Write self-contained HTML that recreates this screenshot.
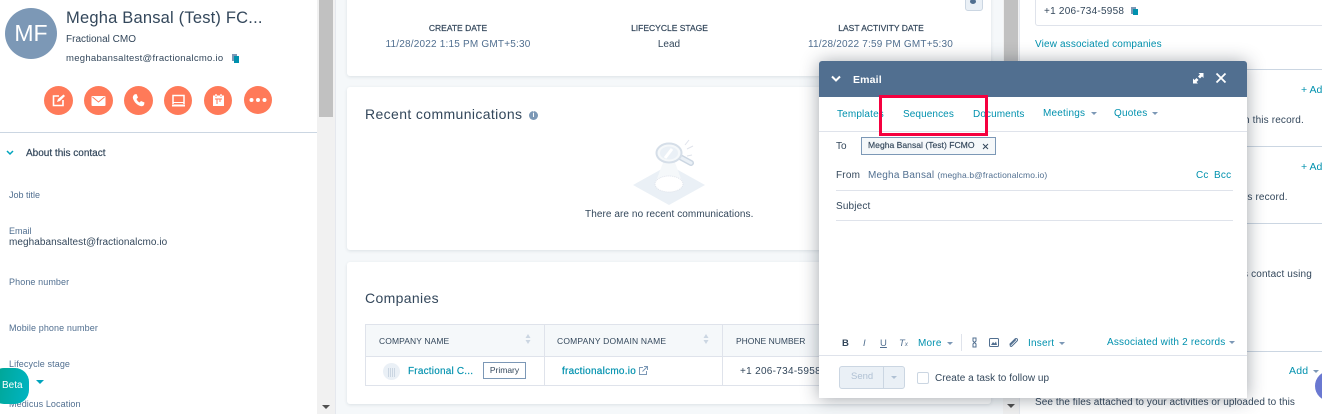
<!DOCTYPE html>
<html><head><meta charset="utf-8"><style>
html,body{margin:0;padding:0;width:1322px;height:414px;overflow:hidden;background:#f5f8fa;font-family:"Liberation Sans",sans-serif;color:#33475b}
.a{position:absolute}
.t{position:absolute;white-space:nowrap;line-height:14px;font-size:10px}
.l{color:#0091ae}
.c{position:absolute;background:#fff;border-radius:3px;box-shadow:0 1px 3px rgba(45,62,80,.12)}
.b{position:absolute;width:29px;height:29px;top:86px;border-radius:50%;background:#ff7a59}
.b svg{position:absolute;left:0;top:0}
.lab{color:#516f90;font-size:9px}
.ln{position:absolute;height:1px;background:#dfe3eb}
.hd{font-size:8.5px;text-align:center;-webkit-text-stroke:.2px #33475b}
.car{position:absolute;width:0;height:0;border-left:3px solid transparent;border-right:3px solid transparent;border-top:3px solid #7c98b6}
</style></head><body>
<div class="a" style="left:0;top:0;width:1322px;height:414px;overflow:hidden">

<!-- left panel -->
<div class="a" style="left:0;top:0;width:317px;height:414px;background:#fff"></div>
<div class="a" style="left:317px;top:0;width:18px;height:414px;background:#f1f1f1"></div>
<div class="a" style="left:319px;top:0;width:14px;height:117px;background:#c1c1c1"></div>
<div class="a" style="left:335px;top:0;width:1px;height:414px;background:#e5e8ee"></div>
<div class="a" style="left:322px;top:405px;border-left:4px solid transparent;border-right:4px solid transparent;border-top:4px solid #505050"></div>

<div class="a" style="left:5px;top:8px;width:52px;height:51px;border-radius:50%;background:#7c98b6;color:#fff;font-size:23px;line-height:51px;text-align:center">MF</div>
<div class="t" style="left:66px;top:8px;font-size:16.5px;line-height:20px;letter-spacing:.2px">Megha Bansal (Test) FC...</div>
<div class="t" style="left:66px;top:33px;font-size:10px">Fractional CMO</div>
<div class="t" style="left:66px;top:52px;font-size:9.5px;letter-spacing:.28px">meghabansaltest@fractionalcmo.io</div>
<svg class="a" style="left:232px;top:54px" width="8" height="9"><rect x="0" y="0" width="5" height="7" fill="#7c98b6"/><rect x="2" y="2" width="5" height="7" fill="#0091ae"/></svg>

<div class="b" style="left:44px"><svg width="29" height="29" fill="none" stroke="#fff" stroke-width="1.6"><path d="M15 10H9.500V19.500H19V14"/><path d="M13 16l1-3 5.500-4.500 1.500 1.500-5 5z" fill="#fff" stroke="none"/></svg></div>
<div class="b" style="left:84px"><svg width="29" height="29"><rect x="7.500" y="10" width="14" height="10" rx="1" fill="#fff"/><path d="M8.500 11l6 5 6-5" fill="none" stroke="#ff7a59"/></svg></div>
<div class="b" style="left:124px"><svg width="29" height="29"><path d="M10 8.500l2.500-.5 1.500 3.500-1.500 1.500c.5 1.500 1.500 2.500 3 3.500l1.500-1.500 3.500 1.500-.5 2.500c-1 1.500-3 1.500-5 .5-3-1.500-5-4-6-7-.5-1.500 0-3 1.500-4z" fill="#fff"/></svg></div>
<div class="b" style="left:164px;width:28px"><svg width="29" height="29" fill="none" stroke="#fff" stroke-width="1.500"><path d="M9 18V9.500H20V18"/><path d="M8 19.500H21" stroke-width="2"/><path d="M9.500 16.500H19.500" stroke-width="1"/></svg></div>
<div class="b" style="left:204px;width:28px"><svg width="29" height="29" fill="none" stroke="#fff" stroke-width="1.300"><rect x="9" y="9.500" width="11" height="10.500" fill="#fff" stroke="none"/><path d="M12 8v3M17 8v3M11 13h7M13 13v5M16 13v3" stroke="#ff7a59" stroke-width="1"/><path d="M12 8v2M17 8v2" stroke="#fff"/></svg></div>
<div class="b" style="left:244px;width:28px;height:28px"><svg width="29" height="28" fill="#fff"><circle cx="7.500" cy="14" r="2"/><circle cx="14" cy="14" r="2"/><circle cx="20.500" cy="14" r="2"/></svg></div>

<div class="a" style="left:0;top:132px;width:317px;height:1px;background:#cbd6e2"></div>
<svg class="a" style="left:6px;top:150px" width="8" height="6" fill="none" stroke="#00a4bd" stroke-width="1.500"><path d="M1 1l3 3 3-3"/></svg>
<div class="t" style="left:26px;top:146px;font-size:10px;font-weight:400;-webkit-text-stroke:.2px #33475b;line-height:15px">About this contact</div>
<div class="t lab" style="left:9px;top:188px">Job title</div>
<div class="t lab" style="left:9px;top:224px">Email</div>
<div class="t" style="left:9px;top:236px;font-size:10px;letter-spacing:.06px">meghabansaltest@fractionalcmo.io</div>
<div class="t lab" style="left:9px;top:275px;letter-spacing:.1px">Phone number</div>
<div class="t lab" style="left:9px;top:321px;letter-spacing:.1px">Mobile phone number</div>
<div class="t lab" style="left:9px;top:357px;letter-spacing:.1px">Lifecycle stage</div>
<div class="a" style="left:36px;top:380px;border-left:4px solid transparent;border-right:4px solid transparent;border-top:4px solid #00a4bd"></div>
<div class="t lab" style="left:9px;top:397px;letter-spacing:.1px">Medicus Location</div>
<div class="a" style="left:-10px;top:368px;width:39px;height:36px;border-radius:14px;background:linear-gradient(100deg,#00a38d,#00b5c4);color:#fff;font-size:10px;line-height:36px;text-align:right;padding-right:0"><span style="position:absolute;left:12px">Beta</span></div>

<!-- middle cards -->
<div class="c" style="left:347px;top:-5px;width:644px;height:81px"></div>
<div class="a" style="left:965px;top:-6px;width:16px;height:15px;background:#eaf0f6;border:1px solid #cbd6e2;border-radius:3px"></div>
<div class="a" style="left:970px;top:-1px;width:6px;height:5px;border-radius:50%;background:#516f90"></div>
<div class="t hd" style="left:350px;width:216px;top:21px">CREATE DATE</div>
<div class="t" style="left:347px;width:222px;top:38px;text-align:center;font-size:10px;letter-spacing:.2px;color:#516f90">11/28/2022 1:15 PM GMT+5:30</div>
<div class="t hd" style="left:582px;width:175px;top:21px">LIFECYCLE STAGE</div>
<div class="t" style="left:569px;width:200px;top:38px;text-align:center;font-size:10px">Lead</div>
<div class="t hd" style="left:781px;width:200px;top:21px">LAST ACTIVITY DATE</div>
<div class="t" style="left:768px;width:225px;top:38px;text-align:center;font-size:10px;letter-spacing:.2px;color:#516f90">11/28/2022 7:59 PM GMT+5:30</div>

<div class="c" style="left:347px;top:87px;width:644px;height:163px"></div>
<div class="t" style="left:365px;top:106px;font-size:14px;line-height:16px;letter-spacing:.38px">Recent communications</div>
<div class="a" style="left:529px;top:111px;width:9px;height:9px;border-radius:50%;background:#7c98b6;color:#fff;font-size:7px;line-height:9px;text-align:center;font-weight:bold">i</div>
<svg class="a" style="left:630px;top:138px" width="80" height="70">
<path d="M3 47L39 27 75 47 39 67z" fill="#eaf0f6"/>
<path d="M25 46L34 22h10L53 46c0 8-28 8-28 0z" fill="#f5f8fa"/>
<ellipse cx="39" cy="46" rx="14" ry="8" fill="#fff" stroke="#dfe3eb" stroke-dasharray="1 1"/>
<path d="M50 19l11 6" stroke="#cbd6e2" stroke-width="6" stroke-linecap="round"/>
<path d="M50 19l11 6" stroke="#eaf0f6" stroke-width="3" stroke-linecap="round"/>
<ellipse cx="39" cy="15" rx="12.500" ry="9.500" fill="#f5f8fa" stroke="#d5dee8" stroke-width="2"/>
<ellipse cx="39" cy="15" rx="9" ry="6.500" fill="#eaf0f6"/>
<path d="M35 20l7-9" stroke="#fff" stroke-width="3"/>
<path d="M55 7l4-5M57 11l6-3M57 18l5-1" stroke="#dfe3eb" stroke-width="1" fill="none"/>
</svg>
<div class="t" style="left:585px;top:207px;font-size:10px;letter-spacing:.08px;line-height:15px">There are no recent communications.</div>

<div class="c" style="left:347px;top:262px;width:644px;height:142px"></div>
<div class="t" style="left:365px;top:290px;font-size:14px;line-height:16px;letter-spacing:.35px">Companies</div>
<div class="a" style="left:365px;top:324px;width:480px;height:33px;background:#f5f8fa;border-top:1px solid #dfe3eb;border-bottom:1px solid #dfe3eb;border-left:1px solid #dfe3eb;box-sizing:border-box"></div>
<div class="a" style="left:365px;top:357px;width:480px;height:29px;border-bottom:1px solid #dfe3eb;border-left:1px solid #dfe3eb;box-sizing:border-box"></div>
<div class="a" style="left:544px;top:324px;width:1px;height:62px;background:#dfe3eb"></div>
<div class="a" style="left:722px;top:324px;width:1px;height:62px;background:#dfe3eb"></div>
<div class="t" style="left:379px;top:334px;font-size:8.500px;letter-spacing:.1px">COMPANY NAME</div>
<div class="t" style="left:557px;top:334px;font-size:8.500px;letter-spacing:.2px">COMPANY DOMAIN NAME</div>
<div class="t" style="left:736px;top:334px;font-size:8.500px;letter-spacing:0">PHONE NUMBER</div>
<svg class="a" style="left:525px;top:334px" width="6" height="11" fill="#cbd6e2"><path d="M3 0l2.500 4h-5zM3 10L.500 6h5z"/></svg>
<svg class="a" style="left:703px;top:334px" width="6" height="11" fill="#cbd6e2"><path d="M3 0l2.500 4h-5zM3 10L.500 6h5z"/></svg>
<div class="a" style="left:383px;top:363px;width:17px;height:17px;border-radius:50%;background:#eaf0f6"></div>
<div class="a" style="left:388px;top:368px;width:7px;height:9px;background:repeating-linear-gradient(90deg,#cbd6e2 0 1px,transparent 1px 2px)"></div>
<div class="t l" style="left:408px;top:365px;font-size:10px;letter-spacing:.2px;-webkit-text-stroke:.15px #0091ae">Fractional C...</div>
<div class="a" style="left:483px;top:362px;width:43px;height:17px;border:1px solid #7c98b6;box-sizing:border-box;font-size:8.500px;line-height:14px;text-align:center;background:#fff">Primary</div>
<div class="t l" style="left:562px;top:365px;font-size:10px;letter-spacing:.25px;-webkit-text-stroke:.2px #0091ae">fractionalcmo.io</div>
<svg class="a" style="left:639px;top:366px" width="9" height="9" fill="none" stroke="#7c98b6"><path d="M4 1.500H.500V8.500H7.500V5M3.500 5.500L8 1M5 .500H8.500V4"/></svg>
<div class="t" style="left:740px;top:365px;font-size:10px;letter-spacing:.3px">+1 206-734-5958</div>

<!-- second scrollbar -->
<div class="a" style="left:1003px;top:0;width:17px;height:414px;background:#f1f1f1"></div>
<div class="a" style="left:1004px;top:0;width:14px;height:117px;background:#c1c1c1"></div>
<div class="a" style="left:1019px;top:0;width:1px;height:414px;background:#e5e8ee"></div>
<div class="a" style="left:1007px;top:404px;border-left:4px solid transparent;border-right:4px solid transparent;border-top:4px solid #505050"></div>

<!-- right panel -->
<div class="a" style="left:1020px;top:0;width:302px;height:414px;background:#fff"></div>
<div class="a" style="left:1035px;top:-5px;width:300px;height:31px;border:1px solid #dfe3eb;box-sizing:border-box;border-radius:3px"></div>
<div class="t" style="left:1044px;top:4px;font-size:10px;letter-spacing:.25px;line-height:15px">+1 206-734-5958</div>
<svg class="a" style="left:1131px;top:7px" width="8" height="9"><rect x="0" y="0" width="5" height="7" fill="#7c98b6"/><rect x="2" y="2" width="5" height="6" fill="#0091ae"/></svg>
<div class="t l" style="left:1035px;top:37px;font-size:10px;letter-spacing:.14px;line-height:15px">View associated companies</div>
<div class="a" style="left:1020px;top:69px;width:302px;height:1px;background:#cbd6e2"></div>
<div class="t l" style="left:1301px;top:83px;font-size:10.500px">+ Add</div>
<div class="t" style="left:1244px;top:113px;font-size:10px;letter-spacing:.15px;line-height:15px">n this record.</div>
<div class="a" style="left:1020px;top:146px;width:302px;height:1px;background:#cbd6e2"></div>
<div class="t l" style="left:1301px;top:160px;font-size:10.500px">+ Add</div>
<div class="t" style="left:1245px;top:190px;font-size:10px;letter-spacing:.15px;line-height:15px">is record.</div>
<div class="a" style="left:1020px;top:223px;width:302px;height:1px;background:#cbd6e2"></div>
<div class="t" style="left:1243px;top:267px;font-size:10px;letter-spacing:.15px;line-height:15px">s contact using</div>
<div class="a" style="left:1020px;top:351px;width:302px;height:1px;background:#cbd6e2"></div>
<div class="t l" style="left:1289px;top:364px;font-size:10.500px;letter-spacing:.2px">Add</div>
<div class="car" style="left:1313px;top:370px"></div>
<div class="t" style="left:1035px;top:395px;font-size:10px;letter-spacing:.07px;line-height:15px">See the files attached to your activities or uploaded to this</div>
<div class="a" style="left:1315px;top:371px;width:30px;height:30px;border-radius:50%;background:#6a78d1"></div>

<!-- modal -->
<div class="a" style="left:819px;top:61px;width:428px;height:337px;background:#fff;border-radius:3px 3px 0 0;box-shadow:0 1px 18px rgba(30,40,55,.42)"></div>
<div class="a" style="left:819px;top:61px;width:428px;height:36px;background:#516f90;border-radius:3px 3px 0 0"></div>
<svg class="a" style="left:831px;top:75px" width="10" height="8" fill="none" stroke="#fff" stroke-width="2"><path d="M1 1.500l4 4 4-4"/></svg>
<div class="t" style="left:853px;top:73px;color:#fff;font-size:10.500px;font-weight:bold;letter-spacing:.15px">Email</div>
<svg class="a" style="left:1193px;top:73px" width="11" height="11" fill="#fff"><path d="M5.500 0h5v5L9 3.500 7 5.500 5 3.500 7 1.500zM5 10.500H0v-5L1.500 7l2-2 2 2-2 2z"/></svg>
<svg class="a" style="left:1215px;top:72px" width="12" height="12" fill="none" stroke="#fff" stroke-width="1.800"><path d="M1.500 1.500l9 9M10.500 1.500l-9 9"/></svg>

<div class="t l" style="left:837px;top:108px;font-size:10px;letter-spacing:.15px">Templates</div>
<div class="t l" style="left:903px;top:108px;font-size:10px;letter-spacing:.1px">Sequences</div>
<div class="t l" style="left:973px;top:108px;font-size:10px;letter-spacing:.1px">Documents</div>
<div class="t l" style="left:1043px;top:107px;font-size:10px;letter-spacing:.2px">Meetings</div>
<div class="car" style="left:1091px;top:112px"></div>
<div class="t l" style="left:1114px;top:107px;font-size:10px;letter-spacing:.2px">Quotes</div>
<div class="car" style="left:1152px;top:112px"></div>
<div class="a" style="left:819px;top:131px;width:428px;height:1px;background:#dfe3eb"></div>
<div class="a" style="left:879px;top:95px;width:109px;height:41px;border:3px solid #f5003f;box-sizing:border-box"></div>

<div class="t" style="left:836px;top:140px;font-size:10px">To</div>
<div class="a" style="left:861px;top:137px;width:135px;height:18px;background:#f5f8fa;border:1px solid #7c98b6;box-sizing:border-box"></div>
<div class="t" style="left:868px;top:138px;font-size:8.600px;letter-spacing:0;-webkit-text-stroke:.15px #33475b">Megha Bansal (Test) FCMO</div>
<svg class="a" style="left:982px;top:143px" width="7" height="7" fill="none" stroke="#33475b"><path d="M1 1l5 5M6 1L1 6"/></svg>

<div class="t" style="left:836px;top:169px;font-size:10px;letter-spacing:.2px">From</div>
<div class="t" style="left:868px;top:168px;font-size:10px;letter-spacing:.2px;line-height:15px;color:#516f90">Megha Bansal <span style="font-size:8.500px;letter-spacing:.12px">(megha.b@fractionalcmo.io)</span></div>
<div class="t l" style="left:1196px;top:168px;font-size:10px;letter-spacing:.2px;line-height:15px">Cc</div>
<div class="t l" style="left:1214px;top:168px;font-size:10px;letter-spacing:.2px;line-height:15px">Bcc</div>
<div class="ln" style="left:836px;top:190px;width:397px"></div>
<div class="t" style="left:836px;top:199px;font-size:10px;letter-spacing:.15px;line-height:15px">Subject</div>
<div class="ln" style="left:836px;top:220px;width:397px"></div>

<div class="t" style="left:842px;top:336px;font-size:9.500px;font-weight:bold;line-height:15px">B</div>
<div class="t" style="left:863px;top:336px;font-size:9.500px;font-style:italic;color:#516f90;line-height:15px">I</div>
<div class="t" style="left:880px;top:336px;font-size:9.500px;text-decoration:underline;color:#516f90;line-height:15px">U</div>
<div class="t" style="left:899px;top:336px;font-size:9.500px;font-style:italic;color:#516f90;line-height:15px">T<span style="font-size:6px">x</span></div>
<div class="t l" style="left:918px;top:336px;font-size:10px;letter-spacing:.2px;line-height:15px">More</div>
<div class="car" style="left:947px;top:342px"></div>
<div class="a" style="left:961px;top:334px;width:1px;height:17px;background:#dfe3eb"></div>
<svg class="a" style="left:971px;top:337px" width="7" height="11" fill="none" stroke="#516f90"><path d="M1.500 1h4M1.500 10h4M2 1.500v2.500l3 3v2.500M5 1.500v2.500l-3 3v2.500"/></svg>
<svg class="a" style="left:989px;top:338px" width="10" height="9"><rect x=".5" y=".5" width="9" height="8" rx="1" fill="none" stroke="#516f90"/><path d="M2 7l2-3 1.500 1.500L7 3.500 8 7z" fill="#516f90"/></svg>
<svg class="a" style="left:1007px;top:337px" width="11" height="11" fill="none" stroke="#516f90"><path d="M9 2.500l-5.500 5.500c-1 1 .5 2 1.500 1l5-5c1.500-1.500-.5-3.500-2-2L2.500 7.500"/></svg>
<div class="t l" style="left:1028px;top:336px;font-size:10px;letter-spacing:.2px;line-height:15px">Insert</div>
<div class="car" style="left:1059px;top:342px"></div>
<div class="t l" style="left:1107px;top:335px;font-size:10px;letter-spacing:.18px;line-height:15px">Associated with 2 records</div>
<div class="car" style="left:1229px;top:341px"></div>
<div class="a" style="left:819px;top:355px;width:428px;height:1px;background:#dfe3eb"></div>

<div class="a" style="left:839px;top:366px;width:66px;height:23px;background:#eaf0f6;border:1px solid #cbd6e2;box-sizing:border-box;border-radius:3px"></div>
<div class="a" style="left:883px;top:366px;width:1px;height:23px;background:#cbd6e2"></div>
<div class="t" style="left:851px;top:370px;font-size:9.500px;color:#b0c1d4">Send</div>
<div class="car" style="left:891px;top:376px;border-top-color:#b0c1d4"></div>
<div class="a" style="left:917px;top:372px;width:12px;height:12px;border:1px solid #cbd6e2;box-sizing:border-box;border-radius:2px"></div>
<div class="t" style="left:935px;top:372px;font-size:10px;letter-spacing:.05px">Create a task to follow up</div>
</div>
</body></html>
